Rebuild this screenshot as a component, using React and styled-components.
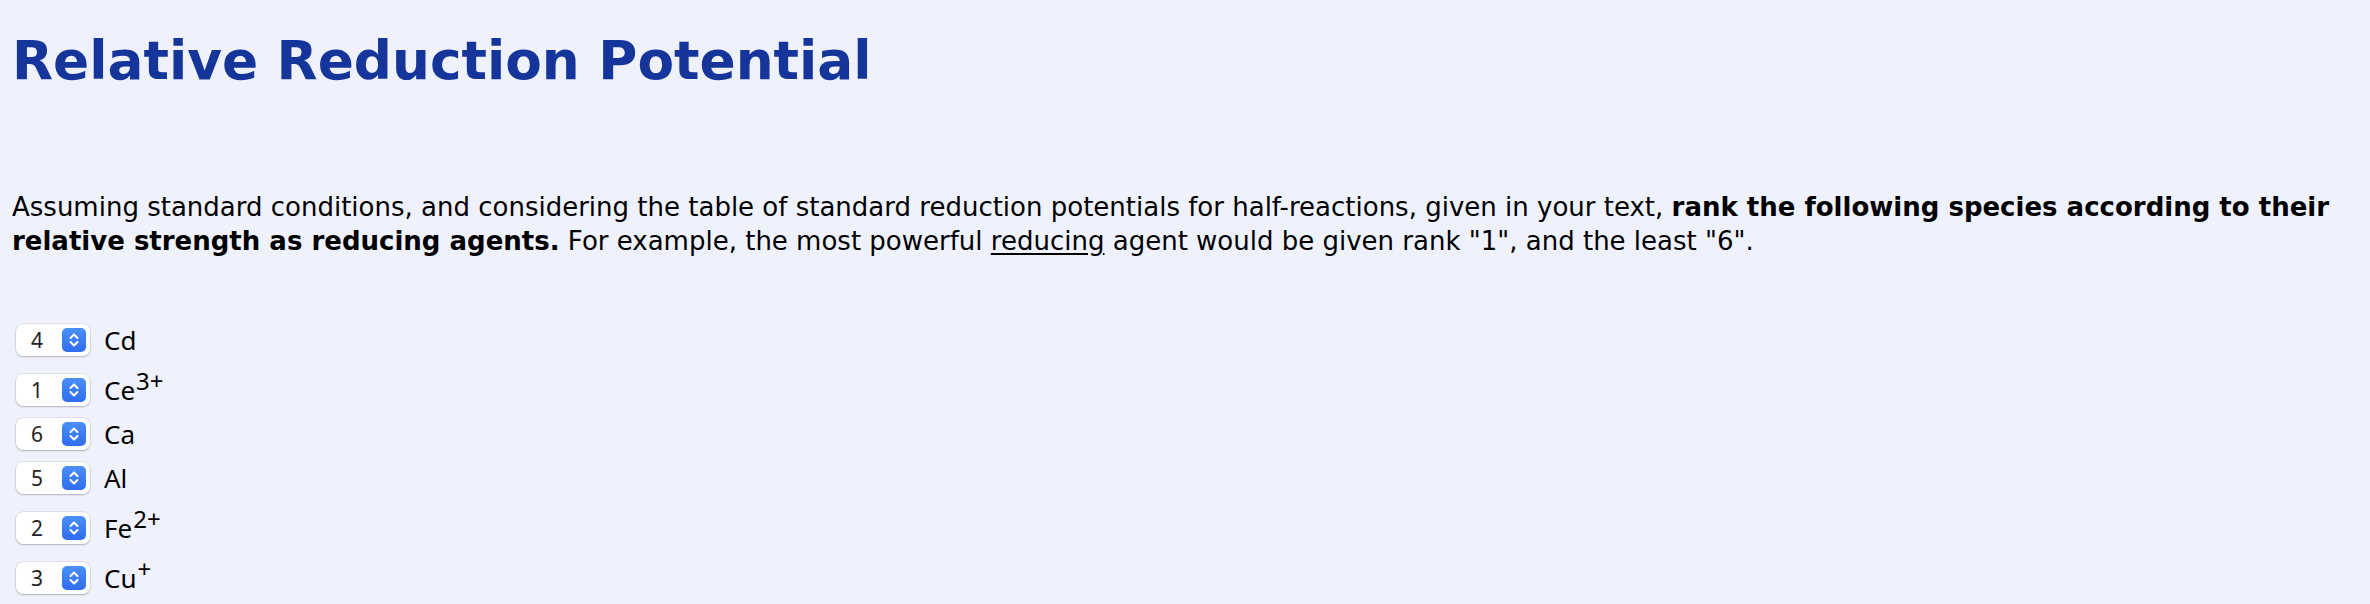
import React from 'react';
import styled, { createGlobalStyle } from 'styled-components';

const Global = createGlobalStyle`
  html, body { margin: 0; padding: 0; background: #eff2fd; }
  body {
    padding: 0 12px;
    font-family: "DejaVu Sans", Verdana, sans-serif;
    color: #000;
  }
`;

const Title = styled.h1`
  margin: 0;
  padding-top: 28px;
  font-size: 53.3px;
  line-height: 66px;
  font-weight: bold;
  color: #15359a;
`;

const Prompt = styled.p`
  margin: 96px 0 0;
  font-size: 26px;
  line-height: 34px;
  b { font-weight: bold; }
  u { text-decoration: underline; text-underline-offset: 3px; }
`;

const List = styled.div`
  margin-top: 60px;
  display: flex;
  flex-direction: column;
  padding-left: 4px;
`;

const Row = styled.div`
  display: flex;
  align-items: center;
  gap: 14px;
  height: 44px;
  padding-top: ${p => (p.$sup ? '6px' : '0')};
`;

const SelectBox = styled.div`
  width: 74px;
  height: 32px;
  box-sizing: border-box;
  background: #fff;
  border-radius: 7px;
  box-shadow: 0 0 0 0.5px rgba(0,0,0,0.12), 0 1px 2px rgba(0,0,0,0.22);
  display: flex;
  align-items: center;
  justify-content: space-between;
  padding: 0 4px 0 15px;
  font-family: "Noto Sans", "Open Sans", sans-serif;
  font-size: 21px;
  color: #222;
`;

const Stepper = styled.span`
  width: 24px;
  height: 24px;
  border-radius: 5px;
  background: linear-gradient(#4b90f9, #2f6df0);
  display: flex;
  align-items: center;
  justify-content: center;
`;

const Label = styled.span`
  font-family: "Noto Sans", "Open Sans", sans-serif;
  font-size: 26px;
  line-height: 1;
  sup {
    font-size: 24px;
    line-height: 0;
    vertical-align: baseline;
    position: relative;
    top: -10px;
    margin-left: 1px;
  }
`;

const Chevrons = () => (
  <svg width="12" height="16" viewBox="0 0 12 16" fill="none" stroke="#fff" strokeWidth="2" strokeLinecap="round" strokeLinejoin="round">
    <path d="M2.5 6 L6 2.5 L9.5 6" />
    <path d="M2.5 10 L6 13.5 L9.5 10" />
  </svg>
);

const items = [
  { v: '4', name: 'Cd' },
  { v: '1', name: 'Ce', sup: '3+' },
  { v: '6', name: 'Ca' },
  { v: '5', name: 'Al' },
  { v: '2', name: 'Fe', sup: '2+' },
  { v: '3', name: 'Cu', sup: '+' },
];

export default function App() {
  return (
    <>
      <Global />
      <Title>Relative Reduction Potential</Title>
      <Prompt>
        Assuming standard conditions, and considering the table of standard reduction potentials for half-reactions, given in your text, <b>rank the following species according to their relative strength as reducing agents.</b> For example, the most powerful <u>reducing</u> agent would be given rank "1", and the least "6".
      </Prompt>
      <List>
        {items.map(it => (
          <Row key={it.name} $sup={!!it.sup}>
            <SelectBox>
              <span>{it.v}</span>
              <Stepper><Chevrons /></Stepper>
            </SelectBox>
            <Label>{it.name}{it.sup && <sup>{it.sup}</sup>}</Label>
          </Row>
        ))}
      </List>
    </>
  );
}
